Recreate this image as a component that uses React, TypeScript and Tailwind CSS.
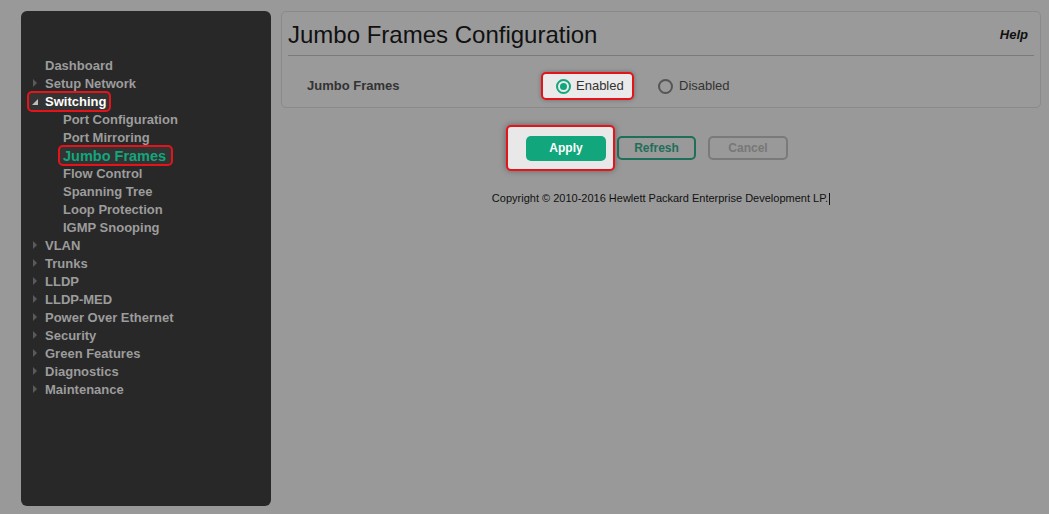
import React from "react";

const font = { fontFamily: '"Liberation Sans", Arial, sans-serif' };

type Item = { label: string; level: 0 | 1; arrow?: "right" | "down"; state?: "open" | "active" };

const items: Item[] = [
  { label: "Dashboard", level: 0 },
  { label: "Setup Network", level: 0, arrow: "right" },
  { label: "Switching", level: 0, arrow: "down", state: "open" },
  { label: "Port Configuration", level: 1 },
  { label: "Port Mirroring", level: 1 },
  { label: "Jumbo Frames", level: 1, state: "active" },
  { label: "Flow Control", level: 1 },
  { label: "Spanning Tree", level: 1 },
  { label: "Loop Protection", level: 1 },
  { label: "IGMP Snooping", level: 1 },
  { label: "VLAN", level: 0, arrow: "right" },
  { label: "Trunks", level: 0, arrow: "right" },
  { label: "LLDP", level: 0, arrow: "right" },
  { label: "LLDP-MED", level: 0, arrow: "right" },
  { label: "Power Over Ethernet", level: 0, arrow: "right" },
  { label: "Security", level: 0, arrow: "right" },
  { label: "Green Features", level: 0, arrow: "right" },
  { label: "Diagnostics", level: 0, arrow: "right" },
  { label: "Maintenance", level: 0, arrow: "right" },
];

function Arrow({ dir }: { dir: "right" | "down" }) {
  if (dir === "down") {
    return (
      <svg width="6" height="6" viewBox="0 0 6 6" className="absolute left-[11px] top-[7px]">
        <path d="M6 0 L6 6 L0 6 Z" fill="#bdbdbd" />
      </svg>
    );
  }
  return (
    <svg width="4" height="8" viewBox="0 0 4 8" className="absolute left-[12px] top-[5px]">
      <path d="M0 0 L4 4 L0 8 Z" fill="#5a5a5a" />
    </svg>
  );
}

function NavRow({ item }: { item: Item }) {
  const color =
    item.state === "open" ? "text-white" : item.state === "active" ? "text-[#12a67c]" : "text-[#9c9c9c]";
  const size = item.state === "active" ? "text-[14.5px]" : "text-[13px]";
  return (
    <li className={`relative h-[18px] leading-[18px] ${item.level === 1 ? "pl-[42px]" : "pl-6"}`}>
      {item.state === "open" && (
        <span className="absolute left-[6px] top-[-1px] w-[84px] h-[21px] rounded-[5px] border-2 border-[#e5141b] bg-[#333]" />
      )}
      {item.state === "active" && (
        <span className="absolute left-[37px] top-[-1px] w-[115px] h-[21px] rounded-[5px] border-2 border-[#e5141b] bg-[#333]" />
      )}
      {item.arrow && <Arrow dir={item.arrow} />}
      <span className={`relative font-bold ${size} ${color} ${item.state === "active" ? "top-px" : ""}`}>{item.label}</span>
    </li>
  );
}

function Radio({ checked }: { checked: boolean }) {
  return checked ? (
    <span className="w-[15px] h-[15px] rounded-full border-2 border-[#12a67c] flex items-center justify-center">
      <span className="w-[7px] h-[7px] rounded-full bg-[#12a67c]" />
    </span>
  ) : (
    <span className="w-[15px] h-[15px] rounded-full border-2 border-[#555]" />
  );
}

export default function App() {
  return (
    <div className="flex h-[514px] w-[1049px] bg-[#999999] pl-[21px] pt-[11px] pb-[8px] pr-[8px] gap-[10px] overflow-hidden" style={font}>
      <aside className="w-[250px] h-[495px] shrink-0 rounded-[6px] bg-[#282828] pt-[45px]">
        <ul>
          {items.map((it) => (
            <NavRow key={it.label} item={it} />
          ))}
        </ul>
      </aside>

      <main className="flex-1 flex flex-col">
        <section className="h-[97px] rounded-[5px] border border-[#8a8a8a] bg-[#9a9a9a] px-[6px]">
          <div className="flex items-end justify-between h-[44px] border-b border-[#7a7a7a] pb-[6px]">
            <h1 className="text-[24px] leading-[28px] text-[#111]">Jumbo Frames Configuration</h1>
            <span className="text-[13px] font-bold italic text-[#111] mb-[5px] mr-[6px]">Help</span>
          </div>
          <div className="flex items-center h-[28px] mt-[16px] pl-[19px]">
            <span className="w-[234px] text-[13px] font-bold text-[#333]">Jumbo Frames</span>
            <span className="flex items-center gap-[5px] h-[28px] w-[93px] pl-[13px] rounded-[5px] border-2 border-[#e5141b] bg-[#eaeaea] shadow-[0_0_4px_rgba(0,0,0,0.3)]">
              <Radio checked />
              <span className="text-[13px] text-[#333]">Enabled</span>
            </span>
            <span className="flex items-center gap-[6px] ml-[24px]">
              <Radio checked={false} />
              <span className="text-[13px] text-[#333]">Disabled</span>
            </span>
          </div>
        </section>

        <div className="flex items-center justify-center mt-[17px] pr-[28px]">
          <span className="flex items-center justify-end w-[109px] h-[46px] pr-[7px] rounded-[5px] border-2 border-[#e5141b] bg-[#e8e8e8] shadow-[0_0_6px_rgba(0,0,0,0.35)]">
            <button className="w-[80px] h-[25px] rounded-[5px] bg-[#12a67c] text-white text-[12px] font-bold">Apply</button>
          </span>
          <button className="ml-[2px] w-[79px] h-[24px] rounded-[5px] border-2 border-[#1f6e5a] text-[#1f6e5a] text-[12px] font-bold">Refresh</button>
          <button className="ml-[12px] w-[80px] h-[24px] rounded-[5px] border-2 border-[#7a7a7a] text-[#777] text-[12px] font-bold">Cancel</button>
        </div>

        <p className="mt-[19px] text-center text-[11px] text-[#111]">
          Copyright © 2010-2016 Hewlett Packard Enterprise Development LP.
          <span className="inline-block w-px h-[12px] bg-[#111] align-middle ml-px" />
        </p>
      </main>
    </div>
  );
}
